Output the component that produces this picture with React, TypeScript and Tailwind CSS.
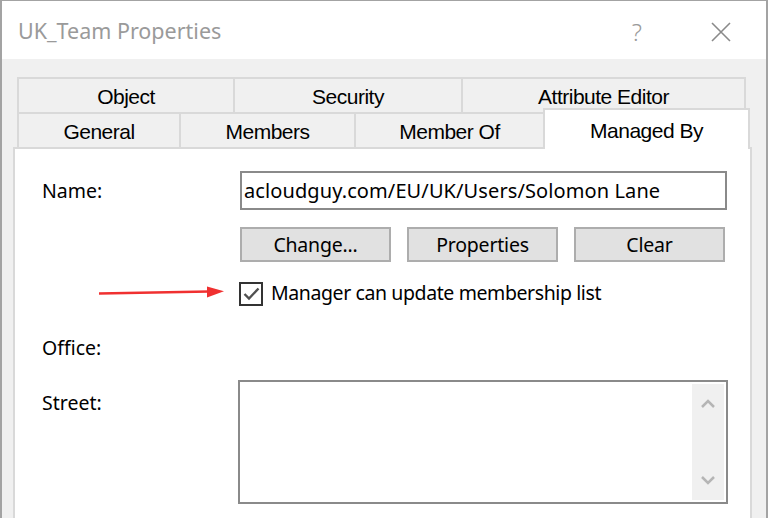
import React from "react"

const tabRowTop = [
  { label: "Object", w: "w-[216px]" },
  { label: "Security", w: "w-[228px]" },
  { label: "Attribute Editor", w: "w-[285px]" },
]

function ChevronUp() {
  return (
    <svg width="16" height="12" viewBox="0 0 16 12" fill="none">
      <path d="M2 9 L8 3 L14 9" stroke="#b5b5b5" strokeWidth="2.5" />
    </svg>
  )
}

function ChevronDown() {
  return (
    <svg width="16" height="12" viewBox="0 0 16 12" fill="none">
      <path d="M2 3 L8 9 L14 3" stroke="#b5b5b5" strokeWidth="2.5" />
    </svg>
  )
}

export default function App() {
  return (
    <div
      className="relative w-[768px] h-[518px] overflow-hidden bg-[#f0f0f0] border-l-2 border-t border-r-2 border-[#a3a3a3] text-black"
      style={{ fontFamily: '"Noto Sans", "Open Sans", sans-serif' }}
    >
      {/* Title bar */}
      <div className="h-[58px] bg-white flex items-center pl-[16px] pr-[34px] pt-[3px]">
        <div className="text-[21.5px] text-[#9a9a9a]">UK_Team Properties</div>
        <div className="ml-auto text-[24px] text-[#9a9a9a] font-light">?</div>
        <svg className="ml-[68px]" width="22" height="22" viewBox="0 0 22 22">
          <path d="M2 2 L20 20 M20 2 L2 20" stroke="#8a8a8a" strokeWidth="1.6" />
        </svg>
      </div>

      {/* Tabs */}
      <div className="pl-[11px] pt-[18px]">
        <div
          className="flex pl-[4px] h-[35px]"
          style={{ fontFamily: '"Liberation Sans", Arial, sans-serif' }}
        >
          {tabRowTop.map((t) => (
            <div
              key={t.label}
              className={`${t.w} flex items-center justify-center border-t-2 border-l-2 border-[#d9d9d9] last:border-r-2 text-[21px] tracking-[-0.5px] pt-[2px]`}
            >
              {t.label}
            </div>
          ))}
        </div>
        <div
          className="flex items-end pl-[4px] h-[35px]"
          style={{ fontFamily: '"Liberation Sans", Arial, sans-serif' }}
        >
          <div className="w-[162px] h-full flex items-center justify-center border-t-2 border-l-2 border-[#d9d9d9] text-[21px] tracking-[-0.5px] pt-[2px]">
            General
          </div>
          <div className="w-[175px] h-full flex items-center justify-center border-t-2 border-l-2 border-[#d9d9d9] text-[21px] tracking-[-0.5px] pt-[2px]">
            Members
          </div>
          <div className="w-[189px] h-full flex items-center justify-center border-t-2 border-l-2 border-[#d9d9d9] text-[21px] tracking-[-0.5px] pt-[2px]">
            Member Of
          </div>
          <div className="relative z-10 w-[207px] h-[41px] -mb-[2px] bg-white flex justify-center border-t-2 border-l-2 border-r-2 border-[#d9d9d9] text-[21px] tracking-[-0.5px] pt-[5px]">
            Managed By
          </div>
        </div>

        {/* Panel */}
        <div className="w-[739px] h-[380px] bg-white border-2 border-[#d9d9d9] pl-[27px] pr-[22px] pt-[22px] text-[19.5px]">
          <div className="flex items-center">
            <div className="w-[198px]">Name:</div>
            <div className="w-[487px] h-[39px] border-2 border-[#8a8a8a] flex items-center pl-[2px] text-[20px] tracking-[0.1px]">
              acloudguy.com/EU/UK/Users/Solomon Lane
            </div>
          </div>

          <div className="flex pl-[198px] mt-[17px] gap-[16px]">
            {["Change...", "Properties", "Clear"].map((b) => (
              <div
                key={b}
                className="w-[151px] h-[35px] bg-[#e1e1e1] border-2 border-[#adadad] flex items-center justify-center tracking-[-0.2px]"
              >
                {b}
              </div>
            ))}
          </div>

          <div className="flex items-center pl-[197px] mt-[18px]">
            <div className="w-[24px] h-[24px] border-2 border-[#333333] bg-white flex items-center justify-center">
              <svg width="17" height="15" viewBox="0 0 17 15" fill="none">
                <path d="M1.5 8 L6 12.5 L15.5 2.5" stroke="#505050" strokeWidth="2.4" />
              </svg>
            </div>
            <div className="ml-[8px] tracking-[-0.4px] -mt-[2px]">Manager can update membership list</div>
          </div>

          <div className="mt-[28px] h-[24px] flex items-center">Office:</div>

          <div className="flex mt-[21px]">
            <div className="w-[196px] pt-[8px]">Street:</div>
            <div className="w-[490px] h-[124px] border-2 border-[#8a8a8a] bg-white flex justify-end p-[2px]">
              <div className="w-[32px] h-full bg-[#f0f0f0] flex flex-col items-center justify-between py-[14px]">
                <ChevronUp />
                <ChevronDown />
              </div>
            </div>
          </div>
        </div>
      </div>

      {/* Red annotation arrow */}
      <svg className="absolute left-[95px] top-[283px]" width="130" height="16" viewBox="0 0 130 16">
        <path d="M2 9.5 L112 7.5" stroke="#f03030" strokeWidth="2.5" />
        <path d="M110 2.5 L127 7.2 L110 13.5 Z" fill="#f03030" />
      </svg>
    </div>
  )
}
